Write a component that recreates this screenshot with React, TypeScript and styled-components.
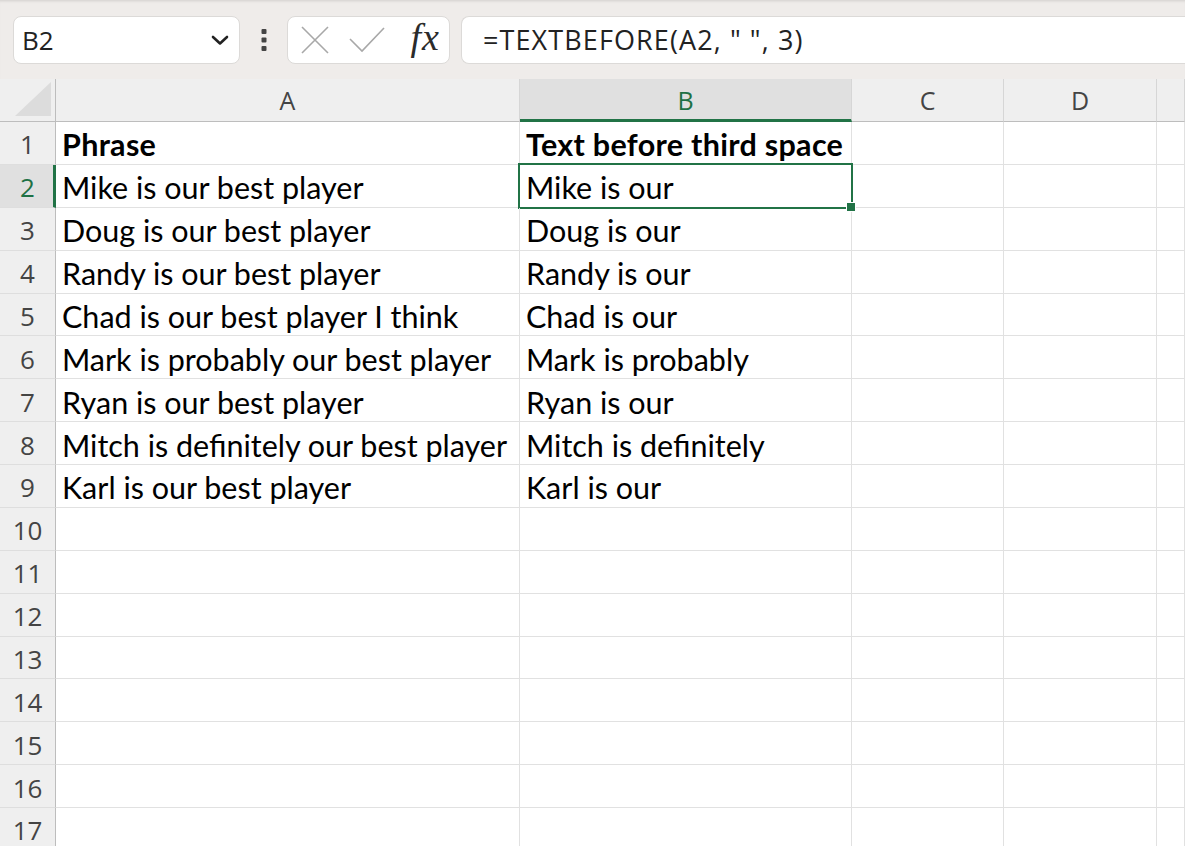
import React from "react";
import styled, { createGlobalStyle } from "styled-components";

const GlobalStyle = createGlobalStyle`
  html, body { margin: 0; padding: 0; background: #ffffff; overflow: hidden; }
  body { font-family: "Lato", "Open Sans", sans-serif; }
  * { box-sizing: border-box; }
`;

const Page = styled.div`
  width: 1185px;
  height: 846px;
  display: flex;
  flex-direction: column;
  overflow: hidden;
`;

const Toolbar = styled.div`
  height: 79px;
  flex: none;
  background: #efecea;
  display: flex;
  align-items: center;
  padding: 0 0 0 13px;
  box-shadow: inset 0 3px 3px -2px rgba(0, 0, 0, 0.12);
`;

const Box = styled.div<{ $w?: number; $grow?: boolean }>`
  height: 48px;
  width: ${(p) => (p.$w ? `${p.$w}px` : "auto")};
  flex: ${(p) => (p.$grow ? "1" : "none")};
  background: #ffffff;
  border: 1px solid #dcdad8;
  border-radius: 8px;
  display: flex;
  align-items: center;
`;

const NameBox = styled(Box)`
  padding: 0 10px 0 8px;
  justify-content: space-between;
  font-family: "Open Sans", "Noto Sans", sans-serif;
  font-size: 26px;
  color: #222;
`;

const Dots = styled.div`
  width: 47px;
  display: flex;
  justify-content: center;
`;

const ButtonsBox = styled(Box)`
  padding: 0 9px 0 13px;
  justify-content: space-between;
`;

const Fx = styled.span`
  font-family: "Liberation Serif", "DejaVu Serif", serif;
  font-style: italic;
  font-size: 38px;
  color: #2b2b2b;
  line-height: 1;
  margin-top: -6px;
  letter-spacing: 1px;
`;

const FormulaBox = styled(Box)`
  margin-left: 11px;
  border-right: none;
  border-radius: 8px 0 0 8px;
  padding-left: 21px;
  font-family: "Open Sans", "Noto Sans", sans-serif;
  font-size: 27px;
  color: #222;
  letter-spacing: 1.1px;
`;

const Grid = styled.div`
  display: grid;
  grid-template-columns: 56px 464px 332px 152px 153px 1fr;
  grid-template-rows: 43px repeat(17, 42.875px);
  font-family: "Lato", sans-serif;
`;

const Corner = styled.div`
  background: #efefef;
  border-right: 1px solid #bdbdbd;
  border-bottom: 1px solid #bdbdbd;
  display: flex;
  align-items: flex-end;
  justify-content: flex-end;
  padding: 0 4px 5px 0;
`;

const ColHead = styled.div<{ $sel?: boolean }>`
  background: ${(p) => (p.$sel ? "#e0e0e0" : "#efefef")};
  border-right: 1px solid #d6d6d6;
  border-bottom: ${(p) => (p.$sel ? "3px solid #217346" : "1px solid #bdbdbd")};
  color: ${(p) => (p.$sel ? "#1e7145" : "#444")};
  font-family: "Open Sans", "Noto Sans", sans-serif;
  font-size: 25px;
  display: flex;
  align-items: center;
  justify-content: center;
  padding-top: ${(p) => (p.$sel ? "2px" : "0")};
`;

const RowHead = styled.div<{ $sel?: boolean }>`
  background: ${(p) => (p.$sel ? "#e0e0e0" : "#efefef")};
  border-right: ${(p) => (p.$sel ? "3px solid #217346" : "1px solid #bdbdbd")};
  border-bottom: 1px solid #dedede;
  color: ${(p) => (p.$sel ? "#1e7145" : "#444")};
  font-family: "Open Sans", "Noto Sans", sans-serif;
  font-size: 26px;
  display: flex;
  align-items: center;
  justify-content: center;
  padding: 3px 0 0 ${(p) => (p.$sel ? "2px" : "0")};
`;

const Cell = styled.div<{ $bold?: boolean; $active?: boolean }>`
  position: relative;
  border-right: 1px solid #e1e1e1;
  border-bottom: 1px solid #e1e1e1;
  padding: 3px 0 0 6px;
  display: flex;
  align-items: center;
  font-size: 30.5px;
  font-weight: ${(p) => (p.$bold ? 700 : 400)};
  letter-spacing: ${(p) => (p.$bold ? "0.3px" : "0")};
  color: #000;
  white-space: nowrap;
  overflow: visible;
  ${(p) =>
    p.$active &&
    `
    &::after {
      content: "";
      position: absolute;
      left: -2px;
      top: -2px;
      right: -2px;
      bottom: -2px;
      border: 2px solid #217346;
      pointer-events: none;
    }
    &::before {
      content: "";
      position: absolute;
      right: -5px;
      bottom: -5px;
      width: 8px;
      height: 8px;
      background: #217346;
      border: 1px solid #fff;
      z-index: 2;
    }
  `}
`;

const rows: [string, string][] = [
  ["Phrase", "Text before third space"],
  ["Mike is our best player", "Mike is our"],
  ["Doug is our best player", "Doug is our"],
  ["Randy is our best player", "Randy is our"],
  ["Chad is our best player I think", "Chad is our"],
  ["Mark is probably our best player", "Mark is probably"],
  ["Ryan is our best player", "Ryan is our"],
  ["Mitch is definitely our best player", "Mitch is definitely"],
  ["Karl is our best player", "Karl is our"],
];

export default function App() {
  const all: [string, string][] = [...rows];
  while (all.length < 17) all.push(["", ""]);
  return (
    <Page>
      <GlobalStyle />
      <Toolbar>
        <NameBox $w={227}>
          <span>B2</span>
          <svg width="18" height="12" viewBox="0 0 18 12">
            <path d="M2 3 L9 9.5 L16 3" fill="none" stroke="#222" strokeWidth="2.6" strokeLinecap="round" strokeLinejoin="round" />
          </svg>
        </NameBox>
        <Dots>
          <svg width="6" height="24" viewBox="0 0 6 24">
            <rect x="0.5" y="1" width="5" height="5" rx="1" fill="#444" />
            <rect x="0.5" y="9.5" width="5" height="5" rx="1" fill="#444" />
            <rect x="0.5" y="18" width="5" height="5" rx="1" fill="#444" />
          </svg>
        </Dots>
        <ButtonsBox $w={163}>
          <svg width="28" height="28" viewBox="0 0 28 28">
            <path d="M1 1 L27 27 M27 1 L1 27" stroke="#a8a8a8" strokeWidth="1.6" fill="none" />
          </svg>
          <svg width="36" height="26" viewBox="0 0 36 26" style={{ marginLeft: -6 }}>
            <path d="M1 12 L13 24 L35 1" stroke="#a8a8a8" strokeWidth="1.6" fill="none" />
          </svg>
          <Fx>fx</Fx>
        </ButtonsBox>
        <FormulaBox $grow>=TEXTBEFORE(A2, " ", 3)</FormulaBox>
      </Toolbar>
      <Grid>
        <Corner>
          <svg width="36" height="34" viewBox="0 0 36 34">
            <path d="M36 0 L36 34 L0 34 Z" fill="#dcdcdc" />
          </svg>
        </Corner>
        <ColHead>A</ColHead>
        <ColHead $sel>B</ColHead>
        <ColHead>C</ColHead>
        <ColHead>D</ColHead>
        <ColHead />
        {all.map(([a, b], i) => (
          <React.Fragment key={i}>
            <RowHead $sel={i === 1}>{i + 1}</RowHead>
            <Cell $bold={i === 0}>{a}</Cell>
            <Cell $bold={i === 0} $active={i === 1}>{b}</Cell>
            <Cell />
            <Cell />
            <Cell />
          </React.Fragment>
        ))}
      </Grid>
    </Page>
  );
}
